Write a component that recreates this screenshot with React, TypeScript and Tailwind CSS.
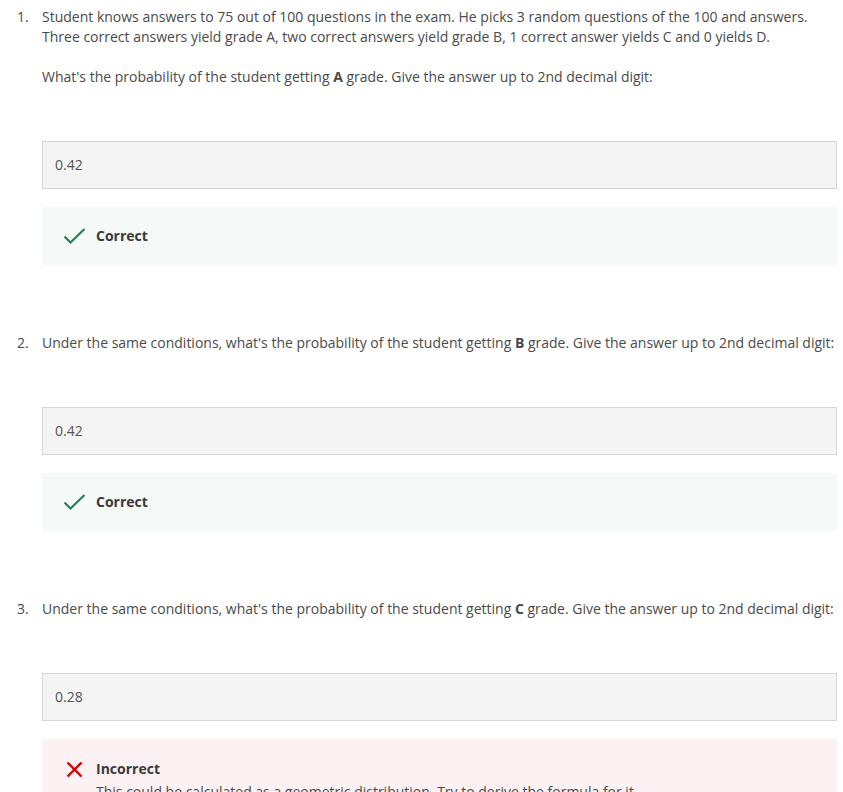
import type { ReactNode } from "react";

function CheckIcon() {
  return (
    <svg width="23" height="16" viewBox="0 0 23 16" className="shrink-0">
      <path d="M1.5 8.5 L7.5 14.5 L21.5 1" fill="none" stroke="#1f8354" strokeWidth="2.2" />
    </svg>
  );
}

function CrossIcon() {
  return (
    <svg width="17" height="17" viewBox="0 0 17 17" className="shrink-0">
      <path d="M1.5 1.5 L15.5 15.5 M15.5 1.5 L1.5 15.5" fill="none" stroke="#d40000" strokeWidth="2.4" />
    </svg>
  );
}

interface QuestionProps {
  num: number;
  answer: string;
  correct: boolean;
  children: ReactNode;
  explanation?: string;
}

function Question({ num, answer, correct, children, explanation }: QuestionProps) {
  return (
    <li className="flex">
      <div className="w-[25px] shrink-0">{num}.</div>
      <div className="flex-1 min-w-0">
        <div>{children}</div>
        <div className="mt-[54px] h-[48px] flex items-center px-3 bg-[#f4f4f4] border border-[#d6d6d6] text-[#555]">
          {answer}
        </div>
        {correct ? (
          <div className="mt-[18px] h-[58px] bg-[#f5f9f8] flex items-center pl-[21px] gap-[10px]">
            <CheckIcon />
            <span className="font-bold text-[#3a3a3a]">Correct</span>
          </div>
        ) : (
          <div className="mt-[18px] bg-[#fcf2f3] pt-[20px] pb-5 pl-[24px]">
            <div className="flex items-center gap-[13px]">
              <CrossIcon />
              <span className="font-bold text-[#3a3a3a]">Incorrect</span>
            </div>
            <div className="pl-[30px] mt-[3px]">{explanation}</div>
          </div>
        )}
      </div>
    </li>
  );
}

export default function App() {
  return (
    <div className="bg-white min-h-screen text-[14px] leading-[20px] text-[#4a4a4a] font-['Open_Sans',sans-serif]">
      <ol className="pl-[17px] pr-[6px] pt-[7px] flex flex-col gap-[68px]">
        <Question num={1} answer="0.42" correct>
          <p>
            Student knows answers to 75 out of 100 questions in the exam. He picks 3 random questions of the 100 and answers.
            Three correct answers yield grade A, two correct answers yield grade B, 1 correct answer yields C and 0 yields D.
          </p>
          <p className="mt-5">
            What's the probability of the student getting <b>A</b> grade. Give the answer up to 2nd decimal digit:
          </p>
        </Question>
        <Question num={2} answer="0.42" correct>
          Under the same conditions, what's the probability of the student getting <b>B</b> grade. Give the answer up to 2nd
          decimal digit:
        </Question>
        <Question
          num={3}
          answer="0.28"
          correct={false}
          explanation="This could be calculated as a geometric distribution. Try to derive the formula for it."
        >
          Under the same conditions, what's the probability of the student getting <b>C</b> grade. Give the answer up to 2nd
          decimal digit:
        </Question>
      </ol>
    </div>
  );
}
